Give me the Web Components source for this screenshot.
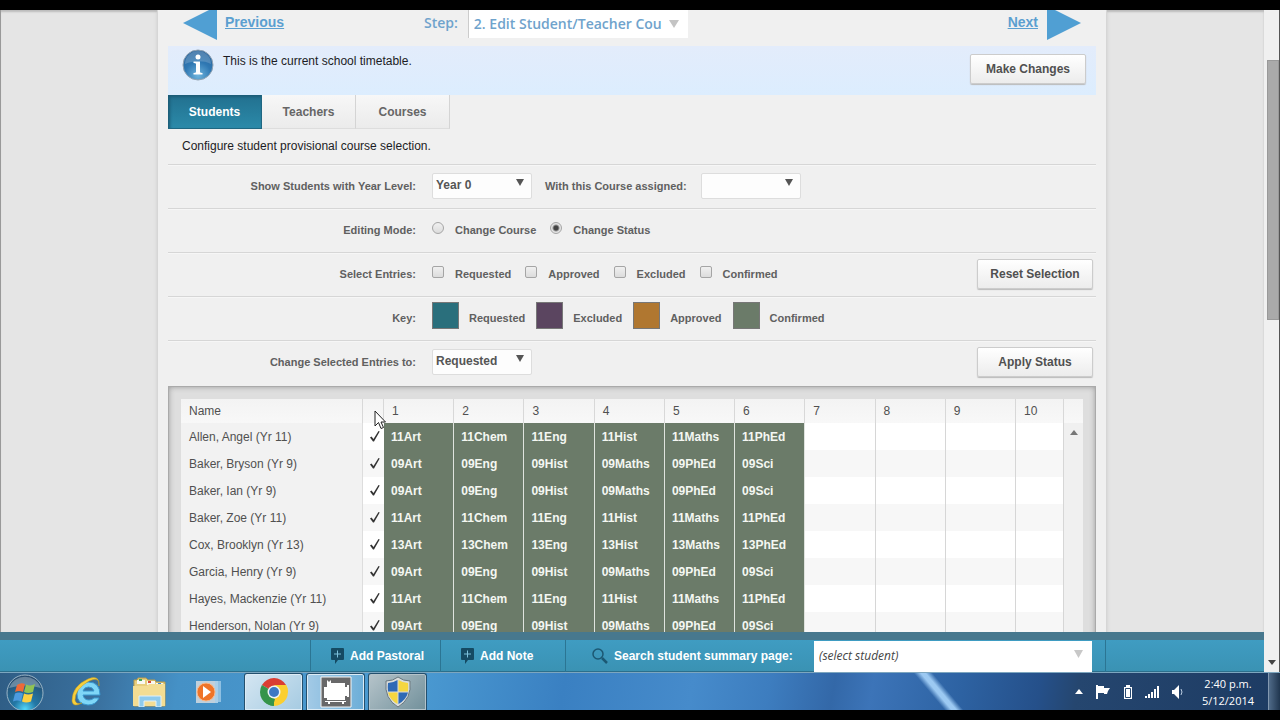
<!DOCTYPE html>
<html lang="en">
<head>
<meta charset="utf-8">
<title>Timetable: Edit Student/Teacher Courses</title>
<style>
   html, body { block-size: 100%; margin: 0; }
   body { background: #000; font: 12px/16px "Liberation Sans", Arial, sans-serif; color: #1c1c24; }
</style>
</head>
<body>
<desktop-screen>
   <browser-view>
      <school-panel>
         <step-nav></step-nav>
         <info-banner>
            This is the current school timetable.
            <push-button slot="action">Make Changes</push-button>
         </info-banner>
         <tab-bar tabs="Students,Teachers,Courses"></tab-bar>
         <intro-text>Configure student provisional course selection.</intro-text>
         <form-row>
            <drop-down class="lead" label="Show Students with Year Level:" value="Year 0"></drop-down>
            <drop-down label="With this Course assigned:" value=""></drop-down>
         </form-row>
         <form-row>
            <choice-group type="radio" label="Editing Mode:" items="Change Course,Change Status" checked="Change Status"></choice-group>
         </form-row>
         <form-row>
            <choice-group type="checkbox" label="Select Entries:" items="Requested,Approved,Excluded,Confirmed"></choice-group>
            <push-button slot="action">Reset Selection</push-button>
         </form-row>
         <form-row>
            <status-key></status-key>
         </form-row>
         <form-row class="last">
            <drop-down class="lead" label="Change Selected Entries to:" value="Requested"></drop-down>
            <push-button slot="action">Apply Status</push-button>
         </form-row>
         <timetable-grid></timetable-grid>
      </school-panel>
      <quick-bar slot="footer"></quick-bar>
   </browser-view>
   <task-bar slot="taskbar"></task-bar>
   <mouse-pointer slot="pointer"></mouse-pointer>
</desktop-screen>

<script>
// Registers an element whose shadow root is the given markup (a string, or a function of the element)
function define(name, markup) {
   customElements.define(name, class extends HTMLElement {
      constructor() {
         super();
         this.attachShadow({ mode: "open" });
      }

      connectedCallback() {
         if (this.shadowRoot.firstChild) return;
         const tmpl = document.createElement("template");
         tmpl.innerHTML = typeof markup === "function" ? markup(this) : markup;
         this.shadowRoot.appendChild(tmpl.content.cloneNode(true));
      }
   });
}

const list = (el, attr) => (el.getAttribute(attr) || "").split(",");

define("desktop-screen", `
   <style>
      :host {
         display: flex;
         flex-direction: column;
         position: relative;
         box-sizing: border-box;
         block-size: 100vh;
         padding-block: 10px;
         overflow: hidden;
         background: #000;
      }
   </style>
   <slot></slot>
   <slot name="taskbar"></slot>
   <slot name="pointer"></slot>
`);

define("browser-view", `
   <style>
      :host { display: flex; flex: 1; min-height: 0; border-inline-end: 1px solid #555; }
      .column { display: flex; flex-direction: column; flex: 1; min-width: 0; }
      main {
         flex: 1;
         min-height: 0;
         overflow: hidden;
         background: #e5e5e5;
         box-shadow: inset 1px 0 #999, inset 0 2px 2px #bbb;
      }
      .rail {
         display: flex;
         flex-direction: column;
         justify-content: space-between;
         inline-size: 15px;
         padding-block: 50px 6px;
         box-sizing: border-box;
         background: #f0f0f0;
      }
      .thumb { block-size: 260px; margin-inline-start: 3px; background: #aaa; box-shadow: inset 0 0 0 1px #999; }
      svg { align-self: center; }
   </style>
   <div class="column">
      <main><slot></slot></main>
      <slot name="footer"></slot>
   </div>
   <div class="rail">
      <div class="thumb"></div>
      <svg width="8" height="6"><path d="M0 0h8L4 5z" fill="#444"/></svg>
   </div>
`);

define("school-panel", `
   <style>
      :host {
         display: block;
         box-sizing: border-box;
         max-inline-size: 948px;
         margin-inline: auto;
         padding-inline: 10px;
         background: #f0f0f0;
         box-shadow: 0 0 0 1px #d6d6d6, 0 0 4px #bbb;
      }
   </style>
   <slot></slot>
`);

define("push-button", `
   <style>
      :host { display: block; }
      button {
         min-inline-size: 116px;
         block-size: 30px;
         padding: 0 12px;
         border: 1px solid #ccc;
         border-radius: 2px;
         background: linear-gradient(#fff, #ececec);
         box-shadow: 0 1px 1px #bbb;
         font: bold 12px/16px "Liberation Sans", Arial, sans-serif;
         color: #505050;
      }
   </style>
   <button type="button"><slot></slot></button>
`);

define("step-nav", `
   <style>
      :host {
         display: flex;
         align-items: flex-start;
         block-size: 36px;
         padding-inline: 15px;
         font: bold 14px/16px "Liberation Sans", Arial, sans-serif;
         color: #6fa3cc;
      }
      a { color: #5b9fd0; margin-block-start: 4px; }
      svg { flex: none; fill: #509fd3; }
      .back { display: flex; gap: 8px; inline-size: 241px; }
      .next { display: flex; gap: 9px; flex: 1; justify-content: flex-end; }
      .step { display: flex; align-items: flex-start; gap: 10px; font: 600 14px/18px "Open Sans", sans-serif; }
      label { margin-block-start: 4px; }
      .box { display: grid; inline-size: 220px; }
      select, .box svg { grid-area: 1 / 1; }
      select {
         appearance: none;
         block-size: 28px;
         padding: 0 5px;
         border: 0;
         border-inline-start: 1px solid #ccc;
         border-radius: 0;
         background: #fff;
         font: inherit;
         color: #6fa3cc;
      }
      .box svg { place-self: center end; margin-inline-end: 9px; fill: #c4c4c4; pointer-events: none; }
   </style>
   <div class="back">
      <svg width="34" height="30"><path d="M0 13 26 0h8v30z"/></svg>
      <a href="#previous">Previous</a>
   </div>
   <div class="step">
      <label for="step">Step:</label>
      <div class="box">
         <select id="step"><option>2. Edit Student/Teacher Cou</option></select>
         <svg width="10" height="8"><path d="M0 0h10L5 8z"/></svg>
      </div>
   </div>
   <div class="next">
      <a href="#next">Next</a>
      <svg width="34" height="30"><path d="M34 13 8 0H0v30z"/></svg>
   </div>
`);

define("info-banner", `
   <style>
      :host {
         display: flex;
         align-items: flex-start;
         block-size: 49px;
         box-sizing: border-box;
         padding: 3px 10px 0 14px;
         background: linear-gradient(#e3ecfb, #dcedfe);
      }
      svg { flex: none; }
      p { flex: 1; margin: 4px 0 0 9px; }
      ::slotted([slot="action"]) { margin-block-start: 5px; }
   </style>
   <svg width="32" height="32" viewBox="0 0 32 32">
      <defs>
         <radialGradient id="ball" cx=".5" cy=".85" r=".9">
            <stop offset="0" stop-color="#6fb4dc"/>
            <stop offset=".5" stop-color="#2f78b3"/>
            <stop offset="1" stop-color="#2a6299"/>
         </radialGradient>
      </defs>
      <circle cx="16" cy="16" r="15" fill="url(#ball)" stroke="#93a3b2"/>
      <path d="M3 15a13 13 0 0 1 26 0c-8-4-18-3-26 0z" fill="#fff" opacity=".18"/>
      <circle cx="16" cy="8" r="2.500" fill="#fff"/>
      <path d="M11.500 12.500H18V23q0 1 2.500 1v1.500h-9V24q2.500 0 2.500-1v-8q0-1-2.500-1z" fill="#fff"/>
   </svg>
   <p><slot></slot></p>
   <slot name="action"></slot>
`);

define("tab-bar", el => `
   <style>
      :host { display: flex; block-size: 34px; }
      div { display: flex; }
      button {
         min-inline-size: 94px;
         padding: 0 20px;
         border: 0;
         border-inline-end: 1px solid #d4d4d4;
         border-block-end: 1px solid #ddd;
         background: linear-gradient(#f7f7f7, #ebebeb);
         font: bold 12px/16px "Liberation Sans", Arial, sans-serif;
         color: #666;
      }
      button[aria-selected="true"] {
         background: linear-gradient(#22708f, #2b8aa9);
         border-color: #1f6782;
         color: #fff;
         box-shadow: inset 2px 2px 3px #1b5b75;
      }
   </style>
   <div role="tablist">
      ${list(el, "tabs").map((t, i) => `<button type="button" role="tab" aria-selected="${i === 0}">${t}</button>`).join("")}
   </div>
`);

define("intro-text", `
   <style>
      :host { display: block; padding: 9px 14px 10px; }
   </style>
   <slot></slot>
`);

define("form-row", `
   <style>
      :host {
         display: flex;
         align-items: center;
         gap: 13px;
         box-sizing: border-box;
         block-size: 44px;
         padding: 0 3px 2px 0;
         border-block-start: 1px solid #d6d6d6;
         box-shadow: inset 0 1px #f6f6f6;
         font-size: 11px;
         font-weight: bold;
         color: #606060;
      }
      :host(.last) { block-size: 46px; padding-block-end: 4px; }
      ::slotted([slot="action"]) { margin-inline-start: auto; }
   </style>
   <slot></slot>
   <slot name="action"></slot>
`);

define("drop-down", el => `
   <style>
      :host { display: flex; align-items: center; gap: 14px; }
      :host(.lead) { gap: 16px; }
      :host(.lead) label { inline-size: 248px; text-align: end; }
      .box { display: grid; inline-size: 100px; }
      select, svg { grid-area: 1 / 1; }
      select {
         appearance: none;
         block-size: 26px;
         padding: 0 16px 2px 3px;
         border: 1px solid #ddd;
         border-radius: 2px;
         background: #fdfdfd;
         font: bold 12px/16px "Liberation Sans", Arial, sans-serif;
         color: #555;
      }
      svg { place-self: start end; margin: 6px 8px 0 0; pointer-events: none; }
   </style>
   <label for="choice">${el.getAttribute("label")}</label>
   <div class="box">
      <select id="choice"><option>${el.getAttribute("value")}</option></select>
      <svg width="8" height="7"><path d="M0 0h8L4 7z" fill="#555"/></svg>
   </div>
`);

define("choice-group", el => `
   <style>
      :host { display: block; }
      .group { display: flex; align-items: center; gap: 14px; }
      .caption { inline-size: 248px; margin-inline-end: 2px; text-align: end; }
      label { display: flex; align-items: center; gap: 11px; }
      input {
         appearance: none;
         inline-size: 12px;
         block-size: 12px;
         margin: 0 0 4px;
         border: 1px solid #a5a5a5;
         border-radius: 2px;
         background: linear-gradient(#f0f0f0, #dcdcdc);
      }
      input[type="radio"] { border-radius: 50%; }
      input[type="radio"]:checked { background: radial-gradient(circle, #444 0 2px, #e4e4e4 4px); }
   </style>
   <div class="group" role="group" aria-labelledby="caption">
      <span class="caption" id="caption">${el.getAttribute("label")}</span>
      ${list(el, "items").map(item => `
         <label><input type="${el.getAttribute("type")}" name="choice"${item === el.getAttribute("checked") ? " checked" : ""}>${item}</label>
      `).join("")}
   </div>
`);

const statuses = [["Requested", "#2a6f7c"], ["Excluded", "#5b4560"], ["Approved", "#b07730"], ["Confirmed", "#6b7b69"]];

define("status-key", `
   <style>
      :host { display: flex; align-items: center; gap: 11px; }
      .caption { inline-size: 248px; margin-inline-end: 5px; text-align: end; }
      .entry { display: flex; align-items: center; gap: 10px; }
      i {
         box-sizing: border-box;
         inline-size: 27px;
         block-size: 27px;
         margin-block-end: 4px;
         border: 1px solid #777;
      }
   </style>
   <span class="caption">Key:</span>
   ${statuses.map(([name, colour]) => `<span class="entry"><i style="background:${colour}"></i>${name}</span>`).join("")}
`);

const senior = ["Art", "Chem", "Eng", "Hist", "Maths", "PhEd"];
const junior = ["Art", "Eng", "Hist", "Maths", "PhEd", "Sci"];
const students = [
   ["Allen, Angel", 11], ["Baker, Bryson", 9], ["Baker, Ian", 9], ["Baker, Zoe", 11],
   ["Cox, Brooklyn", 13], ["Garcia, Henry", 9], ["Hayes, Mackenzie", 11], ["Henderson, Nolan", 9],
];
const periods = [1, 2, 3, 4, 5, 6, 7, 8, 9, 10];

function studentRow([name, year], index) {
   const courses = (year > 10 ? senior : junior).map(c => String(year).padStart(2, "0") + c);
   return `
      <tr>
         <th scope="row">${name} (Yr ${year})</th>
         <td class="tick"><svg width="10" height="11"><path d="M0 6.500 1.500 5.500 3.500 8 8.500 0l1.200.6L4 10.500H3z" fill="#333"/></svg></td>
         ${periods.map((p, i) => courses[i] ? `<td class="set">${courses[i]}</td>` : "<td></td>").join("")}
         ${index === 0 ? `<td class="rail" rowspan="${students.length}"><svg width="8" height="5"><path d="M0 5h8L4 0z" fill="#777"/></svg></td>` : ""}
      </tr>`;
}

define("timetable-grid", `
   <style>
      :host {
         display: block;
         padding: 13px;
         background: #dedede;
         box-shadow: inset 0 0 0 1px #aaa, inset 0 0 6px #888;
      }
      table { inline-size: 100%; table-layout: fixed; border-collapse: separate; border-spacing: 0; color: #505050; }
      th, td { box-sizing: border-box; padding: 0 7px; text-align: start; font-weight: normal; white-space: nowrap; }
      thead th { block-size: 24px; padding-inline-start: 8px; border-inline-end: 1px solid #d8d8d8; background: linear-gradient(#f3f3f3, #f8f8f8); }
      thead th:last-child { border: 0; }
      tbody th { block-size: 27px; padding-inline-start: 8px; background: #f2f2f2; border-inline-end: 1px solid #ddd; }
      td { background: #fff; border-inline-end: 1px solid #d6d6d6; }
      tr:nth-child(even) td { background: #f7f7f7; }
      tr td.set { background: #6b7b69; border-color: #dfe3de; font-weight: bold; color: #f4f7f2; }
      td.tick { padding: 0 0 0 3px; text-align: center; border: 0; }
      td.tick svg { display: block; margin-inline: auto; }
      td.rail { background: #f0f0f0; border: 0; padding: 7px 0 0; vertical-align: top; text-align: center; }
      td.rail svg { display: block; margin-inline: auto; }
   </style>
   <table>
      <colgroup>
         <col style="width:182px"><col style="width:21px"><col span="9"><col style="width:48px"><col style="width:19px">
      </colgroup>
      <thead>
         <tr><th scope="col">Name</th><th></th>${periods.map(p => `<th scope="col">${p}</th>`).join("")}<th></th></tr>
      </thead>
      <tbody>${students.map(studentRow).join("")}</tbody>
   </table>
`);

const noteIcon = `
   <svg width="13" height="16"><path d="M1 0h11q1 0 1 1v10q0 1-1 1H7l-3 4v-4H1q-1 0-1-1V1q0-1 1-1z" fill="#154a63"/>
   <path d="M6.500 2.500v7M3 6h7" stroke="#7cc0dc"/></svg>`;

define("quick-bar", `
   <style>
      :host {
         display: block;
         border-block-start: 8px solid #47788e;
         background: linear-gradient(#3f9cc2, #3a92b3);
         box-shadow: inset 0 -1px #2b6f8c;
      }
      .bar {
         display: flex;
         justify-content: flex-end;
         box-sizing: border-box;
         block-size: 32px;
         max-inline-size: 948px;
         margin-inline: auto;
         border-inline-end: 1px solid #2b7593;
      }
      button, .search {
         display: flex;
         align-items: center;
         gap: 6px;
         box-sizing: border-box;
         padding: 0 0 0 20px;
         border: 0;
         border-inline-start: 1px solid #2b7593;
         background: none;
         font: bold 12px/16px "Liberation Sans", Arial, sans-serif;
         color: #fff;
      }
      button { inline-size: 130px; }
      button + button { inline-size: 125px; }
      .search { padding: 0 13px 0 26px; }
      .search label { inline-size: 194px; }
      .box { display: grid; inline-size: 278px; }
      select, .box svg { grid-area: 1 / 1; }
      select {
         appearance: none;
         block-size: 31px;
         padding: 0 5px;
         border: 0;
         border-radius: 0;
         background: #fff;
         font: italic 12px/16px "Open Sans", sans-serif;
         color: #444;
      }
      .box svg { place-self: start end; margin: 9px 9px 0 0; pointer-events: none; }
   </style>
   <div class="bar">
      <button type="button">${noteIcon}Add Pastoral</button>
      <button type="button">${noteIcon}Add Note</button>
      <div class="search">
         <svg width="16" height="16" fill="none" stroke="#1c5873"><circle cx="6" cy="6" r="5" stroke-width="1.500"/><path d="m10 10 5 5" stroke-width="2.500"/></svg>
         <label for="student">Search student summary page:</label>
         <div class="box">
            <select id="student"><option>(select student)</option></select>
            <svg width="9" height="8"><path d="M0 0h9L4.500 8z" fill="#c8c8c8"/></svg>
         </div>
      </div>
   </div>
`);

define("task-bar", `
   <style>
      :host {
         display: flex;
         align-items: stretch;
         block-size: 38px;
         box-sizing: border-box;
         border-block-start: 1px solid #7da6bf;
         background:
            linear-gradient(50deg, transparent 42%, #9cc9f2 48% 52%, transparent 58%) 75% 0 / 86px 38px no-repeat,
            linear-gradient(100deg, #2f5d85 0, #3a719f 8%, #4591c6 14%, #4b9bd2 32%, #3a80c2 44%, #468bcb 54%, #3d7dbf 60%, #3368a8 65%, #3c74b8 68%, #2d62a2 75%, #25508a 81%, #25466f 84%, #1d3b63 100%);
      }
      button { display: grid; place-items: center; flex: none; padding: 0; border: 0; background: none; overflow: hidden; }
      .start { inline-size: 50px; }
      .explorer { inline-size: 50px; }
      .browser { inline-size: 74px; }
      .media { inline-size: 70px; }
      .open {
         inline-size: 59px;
         margin-inline-end: 3px;
         border: 1px solid #24506e;
         border-block-end: 0;
         border-radius: 3px 3px 0 0;
         background: linear-gradient(135deg, #d4e6f2, #a6cbe2);
         box-shadow: inset 0 0 0 1px #dcebf5;
      }
      .camera { background: linear-gradient(90deg, #a3cae6, #6caed8); }
      .shield { background: linear-gradient(135deg, #b6c4ca, #71909b); box-shadow: inset 0 0 0 1px #b4c3ca; }
      .tray { display: flex; align-items: center; gap: 12px; margin-inline-start: auto; padding-inline-end: 13px; }
      .tray svg { flex: none; }
      time { inline-size: 54px; margin-inline-start: 4px; font: 11px/17px "Open Sans", sans-serif; color: #fff; text-align: center; white-space: nowrap; }
      .desktop { inline-size: 12px; border-inline-start: 1px solid #8398b0; background: linear-gradient(90deg, #4f6a88, #20364f); }
   </style>
   <button class="start" type="button" aria-label="Start">
      <svg width="40" height="37" viewBox="0 0 40 37">
         <defs>
            <radialGradient id="orb" cx=".5" cy=".95" r=".9">
               <stop offset="0" stop-color="#53d8fa"/><stop offset=".35" stop-color="#2378a6"/><stop offset="1" stop-color="#264b6d"/>
            </radialGradient>
         </defs>
         <circle cx="20" cy="20" r="18" fill="url(#orb)" stroke="#9ab5c7"/>
         <path d="M4 15a17 17 0 0 1 32 0q-16-5-32 0z" fill="#fff" opacity=".3"/>
         <path d="M12 12q4-3 8-1l-2 8q-4-2-8 0z" fill="#ee6a38"/>
         <path d="M21 11.500q5 2 9-.5l-2 8q-5 2-9 0z" fill="#91c353"/>
         <path d="M10 20.500q4-2 8 0l-2 8q-4-2-8 0z" fill="#4c9be0"/>
         <path d="M19 20.500q4 2 9 0l-2 8q-5 2-9 0z" fill="#fbd042"/>
      </svg>
   </button>
   <button class="browser" type="button" aria-label="Internet Explorer">
      <svg width="32" height="32" viewBox="0 0 32 32">
         <path fill-rule="evenodd" d="M29 19H12q1 5 6 5 3 0 5-2h5q-3 7-11 7-11-1-11-11T17 6q12 0 12 13zm-6-4q-1-4-5.500-4T12 15z" fill="#7fd6f7" stroke="#3a98cf"/>
         <path d="M28 10Q29 0 18 5 4 13 4 24q1 5 7 3-9 5-10-2Q1 10 17 3q12-5 11 7z" fill="#f7cf3c" stroke="#c99a1c" stroke-width=".5"/>
      </svg>
   </button>
   <button class="explorer" type="button" aria-label="Explorer">
      <svg width="34" height="30" viewBox="0 0 34 30">
         <path d="M2 3h3l1-2h8l2 2h7l1 2h9v24H2z" fill="#e8cf7e" stroke="#b99b4a"/>
         <path d="M5 3h8v4H5zM15 4h8v4h-8zM24 6h7v3h-7z" fill="#f8f8f2"/>
         <path d="M7 2h3v2H7z" fill="#46a651"/><path d="M16 4h3v2h-3z" fill="#d8493a"/><path d="M26 6h3v2h-3z" fill="#3c89cd"/>
         <path d="M1 9h14l2-2h16v22H1z" fill="#f3dd93"/>
         <path d="M7 30V19h22v11h-5v-6H12v6z" fill="#8ecbed" stroke="#dff1fb"/>
      </svg>
   </button>
   <button class="media" type="button" aria-label="Media Player">
      <svg width="26" height="24" viewBox="0 0 26 24">
         <path d="M6 1h19v21H6z" fill="#8fc0e2"/><path d="M3 1h19v22H3z" fill="#a9cfe9"/><path d="M0 1h19v22H0z" fill="#bfd0dc"/>
         <circle cx="10" cy="12" r="9" fill="#ef7428" stroke="#fbb888"/>
         <path d="m7 6 8 6-8 6z" fill="#fff"/>
      </svg>
   </button>
   <button class="open" type="button" aria-label="Chrome">
      <svg width="30" height="30" viewBox="0 0 30 30">
         <path d="M15 15 2.900 8A14 14 0 0 1 27.100 8z" fill="#da3d32"/>
         <path d="M15 15 27.100 8A14 14 0 0 1 15 29z" fill="#fbcf2f"/>
         <path d="M15 15v14A14 14 0 0 1 2.900 8z" fill="#35944a"/>
         <path d="M15 8h12.100q2 3 1.900 7l-8 1z" fill="#fbcf2f"/><path d="m9 18 7 4-2 7h1q-4 0-8-3z" fill="#35944a"/>
         <circle cx="15" cy="15" r="6.500" fill="#eef3f5"/><circle cx="15" cy="15" r="5" fill="#3c78c3"/>
      </svg>
   </button>
   <button class="open camera" type="button" aria-label="Screen recorder">
      <svg width="32" height="32" viewBox="0 0 32 32">
         <path d="M1 1h30v30H1z" fill="#686869" stroke="#f5f5f5"/>
         <path d="M4 11h3V4l2 2 2-2v3h14v4h2V9h2v12h-2v-1h-2v4H7v-2H4z" fill="#fff"/>
         <path d="M5 25h21v1H5zM8 26h2v2H8zM22 26h2v2h-2z" fill="#fff"/>
      </svg>
   </button>
   <button class="open shield" type="button" aria-label="Security">
      <svg width="28" height="32" viewBox="0 0 28 32">
         <path d="M14 1q5 4 12 4 2 18-12 26Q0 23 2 5q7 0 12-4z" fill="#d8dcdc" stroke="#68777e"/>
         <path d="M13.500 4v11.500H4Q3.500 11 4 7q6-.5 9.500-3z" fill="#2e69b5"/>
         <path d="M14.500 4q3.500 2.500 9.500 3 .5 4 0 8.500h-9.500z" fill="#f5d640"/>
         <path d="M4 16.500h9.500V28Q6 24 4 16.500z" fill="#f5d640"/>
         <path d="M24 16.500h-9.500V28q7.500-4 9.500-11.500z" fill="#2e69b5"/>
      </svg>
   </button>
   <div class="tray">
      <svg width="8" height="5"><path d="M0 5h8L4 0z" fill="#fff"/></svg>
      <svg width="16" height="14" fill="#fff"><path d="M1 0h2v14H1zM3 1h6v7H3zM9 3h6l-2 3-1 3H9z"/></svg>
      <svg width="10" height="14"><path d="M1 2h2V0h4v2h2v12H1z" fill="#fff"/><path d="M2.500 3.500h5v9h-5z" fill="none" stroke="#284a72"/></svg>
      <svg width="14" height="12" fill="#fff"><path d="M0 10h2v2H0zM3 8h2v4H3zM6 6h2v6H6zM9 3h2v9H9zM12 0h2v12h-2z"/></svg>
      <svg width="14" height="14"><path d="M1 5h2l5-5v14L3 9H1z" fill="#fff"/><path d="M10 4q2 3 0 6" fill="none" stroke="#b9cbe0"/></svg>
      <time>2:40 p.m.<br>5/12/2014</time>
   </div>
   <button class="desktop" type="button" aria-label="Show desktop"></button>
`);

// The pointer floats over whatever is under it
define("mouse-pointer", `
   <style>
      :host { position: absolute; left: 374px; top: 410px; pointer-events: none; }
      svg { display: block; }
   </style>
   <svg width="13" height="20"><path d="M1 1v15l3.500-3.500L7 18.500l2.500-1L7 12h4.500z" fill="#fff" stroke="#222"/></svg>
`);
</script>
</body>
</html>
